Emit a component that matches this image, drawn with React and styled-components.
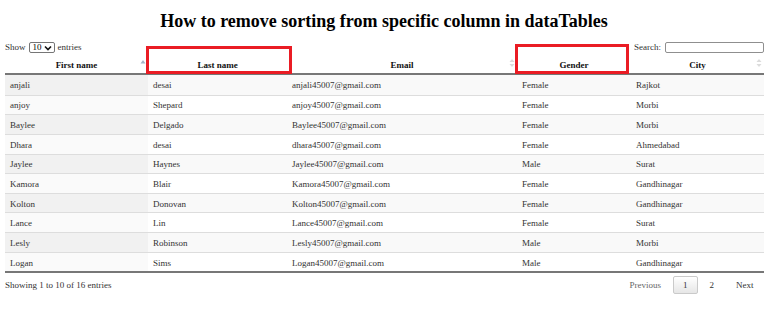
import React from 'react';
import styled, {createGlobalStyle} from 'styled-components';

const rows = [
	['anjali', 'desai', 'anjali45007@gmail.com', 'Female', 'Rajkot'],
	['anjoy', 'Shepard', 'anjoy45007@gmail.com', 'Female', 'Morbi'],
	['Baylee', 'Delgado', 'Baylee45007@gmail.com', 'Female', 'Morbi'],
	['Dhara', 'desai', 'dhara45007@gmail.com', 'Female', 'Ahmedabad'],
	['Jaylee', 'Haynes', 'Jaylee45007@gmail.com', 'Male', 'Surat'],
	['Kamora', 'Blair', 'Kamora45007@gmail.com', 'Female', 'Gandhinagar'],
	['Kolton', 'Donovan', 'Kolton45007@gmail.com', 'Female', 'Gandhinagar'],
	['Lance', 'Lin', 'Lance45007@gmail.com', 'Female', 'Surat'],
	['Lesly', 'Robinson', 'Lesly45007@gmail.com', 'Male', 'Morbi'],
	['Logan', 'Sims', 'Logan45007@gmail.com', 'Male', 'Gandhinagar'],
];

const columns = [
	{label: 'First name', width: 143, sort: 'asc'},
	{label: 'Last name', width: 139, sort: null},
	{label: 'Email', width: 230, sort: 'both'},
	{label: 'Gender', width: 114, sort: null},
	{label: 'City', width: 133, sort: 'both'},
];

function SortIcon({kind}) {
	if (kind === 'asc') {
		return (
			<SortMark width="6" height="10" viewBox="0 0 6 10">
				<path d="M3 2 L5.5 5.5 L0.5 5.5 Z" fill="#a4b4c8" />
			</SortMark>
		);
	}
	return (
		<SortMark width="6" height="10" viewBox="0 0 6 10">
			<path d="M3 1 L5.5 4 L0.5 4 Z" fill="#dcdcdc" />
			<path d="M3 9 L5.5 6 L0.5 6 Z" fill="#dcdcdc" />
		</SortMark>
	);
}

export default function App() {
	return (
		<Page>
			<GlobalStyle />
			<Title>How to remove sorting from specific column in dataTables</Title>
			<TableWrap>
				<TopBar>
					<Length>
						Show
						<SelectBox>
							10
							<svg width="8" height="6" viewBox="0 0 8 6">
								<path d="M1 1.5 L4 4.5 L7 1.5" stroke="#111" strokeWidth="1.6" fill="none" />
							</svg>
						</SelectBox>
						entries
					</Length>
					<Filter>
						Search:
						<SearchInput />
					</Filter>
				</TopBar>
				<Table>
					<colgroup>
						{columns.map(c => <col key={c.label} style={{width: c.width}} />)}
					</colgroup>
					<thead>
						<tr>
							{columns.map(c => (
								<Th key={c.label}>
									{c.label}
									{c.sort && <SortIcon kind={c.sort} />}
								</Th>
							))}
						</tr>
					</thead>
					<tbody>
						{rows.map((r, i) => (
							<Tr key={r[0]} $odd={i % 2 === 0}>
								{r.map((v, j) => (
									<Td key={j}>{v}</Td>
								))}
							</Tr>
						))}
					</tbody>
				</Table>
				<Footer>
					<Info>Showing 1 to 10 of 16 entries</Info>
					<Paging>
						<PageButton $disabled>Previous</PageButton>
						<PageButton $current>1</PageButton>
						<PageButton>2</PageButton>
						<PageButton>Next</PageButton>
					</Paging>
				</Footer>
				<Highlight style={{left: 141, top: 5, width: 146, height: 28}} />
				<Highlight style={{left: 510, top: 3, width: 114, height: 30}} />
			</TableWrap>
		</Page>
	);
}

const GlobalStyle = createGlobalStyle`
	body {
		margin: 0;
		background: #ffffff;
		font-family: "Liberation Serif", "Times New Roman", serif;
		color: #333333;
	}
`;

const Page = styled.div`
	width: 768px;
	height: 322px;
	overflow: hidden;
`;

const Title = styled.h1`
	margin: 10px 0 9px;
	font-size: 18px;
	line-height: 22px;
	font-weight: bold;
	text-align: center;
	color: #000000;
`;

const TableWrap = styled.div`
	position: relative;
	margin: 0 4px 0 5px;
	font-size: 9px;
`;

const TopBar = styled.div`
	display: flex;
	justify-content: space-between;
	align-items: center;
	height: 13px;
	line-height: 11px;
	color: #333333;
`;

const Length = styled.div`
	display: flex;
	align-items: center;
	gap: 3px;
`;

const SelectBox = styled.div`
	display: flex;
	align-items: center;
	justify-content: space-between;
	box-sizing: border-box;
	width: 26px;
	height: 11px;
	padding: 0 2px 0 3px;
	border: 1px solid #767676;
	border-radius: 2px;
	color: #000000;
	background: #ffffff;
`;

const Filter = styled.div`
	display: flex;
	align-items: center;
	gap: 4px;
`;

const SearchInput = styled.div`
	box-sizing: border-box;
	width: 99px;
	height: 11px;
	border: 1px solid #8f8f8f;
	border-radius: 2px;
	background: #ffffff;
`;

const Table = styled.table`
	width: 759px;
	table-layout: fixed;
	border-collapse: separate;
	border-spacing: 0;
	border-bottom: 2px solid #777777;
`;

const Th = styled.th`
	position: relative;
	height: 21px;
	padding: 3px 5px 0;
	box-sizing: border-box;
	border-bottom: 2px solid #777777;
	font-weight: bold;
	font-size: 9px;
	color: #111111;
	text-align: center;
	vertical-align: middle;
`;

const SortMark = styled.svg`
	position: absolute;
	right: 2px;
	top: 4px;
`;

const Tr = styled.tr`
	background: ${props => (props.$odd ? '#f9f9f9' : '#ffffff')};

	td:first-child {
		background: ${props => (props.$odd ? '#f1f1f1' : '#fafafa')};
	}

	&:not(:first-child) td {
		border-top: 1px solid #dddddd;
	}
`;

const Td = styled.td`
	height: 19.65px;
	box-sizing: border-box;
	padding: 1px 5px 0;
	vertical-align: middle;
	color: #333333;
	white-space: nowrap;
`;

const Footer = styled.div`
	display: flex;
	justify-content: space-between;
	align-items: center;
	height: 18px;
	padding-top: 3px;
`;

const Info = styled.div`
	color: #333333;
`;

const Paging = styled.div`
	display: flex;
	align-items: center;
	gap: 1px;
`;

const PageButton = styled.span`
	box-sizing: border-box;
	height: 18px;
	line-height: 16px;
	padding: 0 9.5px;
	border: 1px solid ${props => (props.$current ? '#cacaca' : 'transparent')};
	border-radius: 2px;
	color: ${props => (props.$disabled ? '#666666' : '#333333')};
	background: ${props => (props.$current ? 'linear-gradient(#ffffff, #e6e6e6)' : 'transparent')};
`;

const Highlight = styled.div`
	position: absolute;
	box-sizing: border-box;
	border: 3px solid #ea1c24;
	pointer-events: none;
`;
